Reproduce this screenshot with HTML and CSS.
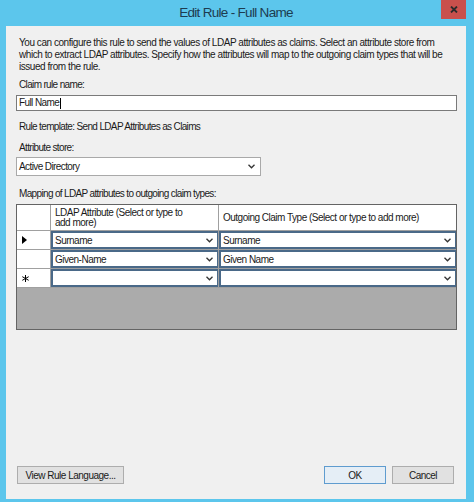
FILE: index.html
```html
<!DOCTYPE html>
<html>
<head>
<meta charset="utf-8">
<link rel="stylesheet" href="styles.css">
</head>
<body>
<div class="window">
  <div class="titlebar">
    <div class="tb-spacer"></div>
    <div class="title">Edit Rule - Full Name</div>
    <div class="tb-right">
      <div class="close">
        <svg width="8" height="7" viewBox="0 0 8 7"><path d="M1 0.5 L7 6.5 M7 0.5 L1 6.5" stroke="#2b2b2b" stroke-width="1.8" fill="none"/></svg>
      </div>
    </div>
  </div>
  <div class="client">
    <p class="intro">You can configure this rule to send the values of LDAP attributes as claims. Select an attribute store from which to extract LDAP attributes. Specify how the attributes will map to the outgoing claim types that will be issued from the rule.</p>
    <div class="lbl lbl-name">Claim rule name:</div>
    <div class="textbox">Full Name<span class="caret"></span></div>
    <div class="lbl lbl-template">Rule template: Send LDAP Attributes as Claims</div>
    <div class="lbl lbl-store">Attribute store:</div>
    <div class="select">
      <span>Active Directory</span>
      <svg class="chev" width="7" height="5" viewBox="0 0 7 5"><path d="M0.5 0.8 L3.5 3.8 L6.5 0.8" stroke="#333" stroke-width="1.3" fill="none"/></svg>
    </div>
    <div class="lbl lbl-map">Mapping of LDAP attributes to outgoing claim types:</div>
    <div class="grid">
      <div class="grow ghead">
        <div class="rh"></div>
        <div class="hc c1">LDAP Attribute (Select or type to<br>add more)</div>
        <div class="hc c2">Outgoing Claim Type (Select or type to add more)</div>
      </div>
      <div class="grow gdata">
        <div class="rh"><svg width="5" height="8" viewBox="0 0 5 8"><path d="M0 0 L5 4 L0 8 Z" fill="#000"/></svg></div>
        <div class="dc c1"><div class="combo"><span>Surname</span><svg class="chev" width="7" height="5" viewBox="0 0 7 5"><path d="M0.5 0.8 L3.5 3.8 L6.5 0.8" stroke="#333" stroke-width="1.3" fill="none"/></svg></div></div>
        <div class="dc c2"><div class="combo"><span>Surname</span><svg class="chev" width="7" height="5" viewBox="0 0 7 5"><path d="M0.5 0.8 L3.5 3.8 L6.5 0.8" stroke="#333" stroke-width="1.3" fill="none"/></svg></div></div>
      </div>
      <div class="grow gdata">
        <div class="rh"></div>
        <div class="dc c1"><div class="combo"><span>Given-Name</span><svg class="chev" width="7" height="5" viewBox="0 0 7 5"><path d="M0.5 0.8 L3.5 3.8 L6.5 0.8" stroke="#333" stroke-width="1.3" fill="none"/></svg></div></div>
        <div class="dc c2"><div class="combo"><span>Given Name</span><svg class="chev" width="7" height="5" viewBox="0 0 7 5"><path d="M0.5 0.8 L3.5 3.8 L6.5 0.8" stroke="#333" stroke-width="1.3" fill="none"/></svg></div></div>
      </div>
      <div class="grow gdata">
        <div class="rh"><svg width="7" height="7" viewBox="0 0 7 7"><path d="M3.5 0 V7 M0.3 1.7 L6.7 5.3 M6.7 1.7 L0.3 5.3" stroke="#000" stroke-width="1" fill="none"/></svg></div>
        <div class="dc c1"><div class="combo"><span></span><svg class="chev" width="7" height="5" viewBox="0 0 7 5"><path d="M0.5 0.8 L3.5 3.8 L6.5 0.8" stroke="#333" stroke-width="1.3" fill="none"/></svg></div></div>
        <div class="dc c2"><div class="combo"><span></span><svg class="chev" width="7" height="5" viewBox="0 0 7 5"><path d="M0.5 0.8 L3.5 3.8 L6.5 0.8" stroke="#333" stroke-width="1.3" fill="none"/></svg></div></div>
      </div>
      <div class="gfill"></div>
    </div>
    <div class="spacer"></div>
    <div class="buttons">
      <div class="btn btn-view">View Rule Language...</div>
      <div class="btn-group">
        <div class="btn btn-ok">OK</div>
        <div class="btn btn-cancel">Cancel</div>
      </div>
    </div>
  </div>
</div>
</body>
</html>
```

FILE: styles.css
```css
html, body {
  margin: 0;
  padding: 0;
}
body {
  width: 474px;
  height: 502px;
  overflow: hidden;
  font-family: "Liberation Sans", Arial, sans-serif;
  font-size: 10px;
  color: #1a1a1a;
}
.window {
  width: 474px;
  height: 502px;
  box-sizing: border-box;
  background: #5cc6ec;
  padding: 0 8px 3px 6px;
  display: flex;
  flex-direction: column;
}
.titlebar {
  height: 26px;
  flex: none;
  display: grid;
  grid-template-columns: 1fr auto 1fr;
  margin: 0 -8px 0 -6px;
  padding: 0 8px 0 6px;
}
.title {
  font-family: "Liberation Sans", Arial, sans-serif;
  font-size: 13.5px;
  color: #1d3c50;
  line-height: 26px;
  letter-spacing: -0.7px;
}
.tb-right {
  display: flex;
  justify-content: flex-end;
  align-items: flex-start;
}
.close {
  width: 25px;
  height: 19px;
  background: #c9504c;
  display: flex;
  align-items: center;
  justify-content: center;
}
.client {
  flex: 1;
  background: #f0f0f0;
  padding: 11px 9px 15px 10px;
  display: flex;
  flex-direction: column;
}
.intro {
  margin: 0;
  padding-left: 3px;
  line-height: 12px;
  letter-spacing: -0.45px;
}
.lbl {
  padding-left: 3px;
  line-height: 12px;
  letter-spacing: -0.65px;
}
.lbl-name { margin-top: 6px; }
.textbox {
  margin-top: 4px;
  height: 16px;
  box-sizing: border-box;
  border: 1px solid #7a7a7a;
  background: #fff;
  padding-left: 2px;
  line-height: 14px;
  letter-spacing: -0.6px;
  display: flex;
  align-items: center;
}
.caret {
  width: 1px;
  height: 11px;
  background: #000;
  margin-left: 1px;
}
.lbl-template { margin-top: 10px; }
.lbl-store { margin-top: 9px; }
.select {
  margin-top: 3px;
  width: 245px;
  height: 19px;
  box-sizing: border-box;
  border: 1px solid #a9a9a9;
  background: #fff;
  display: flex;
  align-items: center;
  justify-content: space-between;
  padding: 0 5px 0 2px;
  letter-spacing: -0.6px;
}
.lbl-map { margin-top: 12px; }
.grid {
  margin-top: 4px;
  height: 126px;
  box-sizing: border-box;
  border: 1px solid #646464;
  background: #ababab;
  display: flex;
  flex-direction: column;
}
.grow {
  display: grid;
  grid-template-columns: 34px 168px 1fr;
  background: #fff;
}
.ghead { height: 26px; }
.gdata { height: 19px; }
.rh {
  border-right: 1px solid #a0a0a0;
  border-bottom: 1px solid #a0a0a0;
  display: flex;
  align-items: center;
  padding-left: 5px;
}
.hc {
  border-right: 1px solid #a0a0a0;
  border-bottom: 1px solid #a0a0a0;
  padding-left: 4px;
  line-height: 10px;
  letter-spacing: -0.5px;
  display: flex;
  align-items: center;
}
.hc.c2 { border-right: none; }
.dc {
  border-right: 1px solid #a0a0a0;
  border-bottom: 1px solid #a0a0a0;
  display: flex;
}
.dc.c2 { border-right: none; }
.combo {
  flex: 1;
  box-sizing: border-box;
  border: 2px solid #4a6988;
  border-right-width: 1px;
  background: #fff;
  display: flex;
  align-items: center;
  justify-content: space-between;
  padding: 0 4px 0 2px;
  letter-spacing: -0.5px;
}
.gfill { flex: 1; }
.spacer { flex: 1; }
.buttons {
  display: flex;
  justify-content: space-between;
  padding: 0 3px 0 1px;
}
.btn-group {
  display: flex;
  gap: 6px;
}
.btn {
  height: 18px;
  box-sizing: border-box;
  border: 1px solid #adadad;
  background: #e1e1e1;
  display: flex;
  align-items: center;
  justify-content: center;
  letter-spacing: -0.5px;
}
.btn-view { width: 107px; }
.btn-ok {
  width: 62px;
  border-color: #5f9ccf;
  background: #e5eef6;
}
.btn-cancel { width: 62px; }
```
